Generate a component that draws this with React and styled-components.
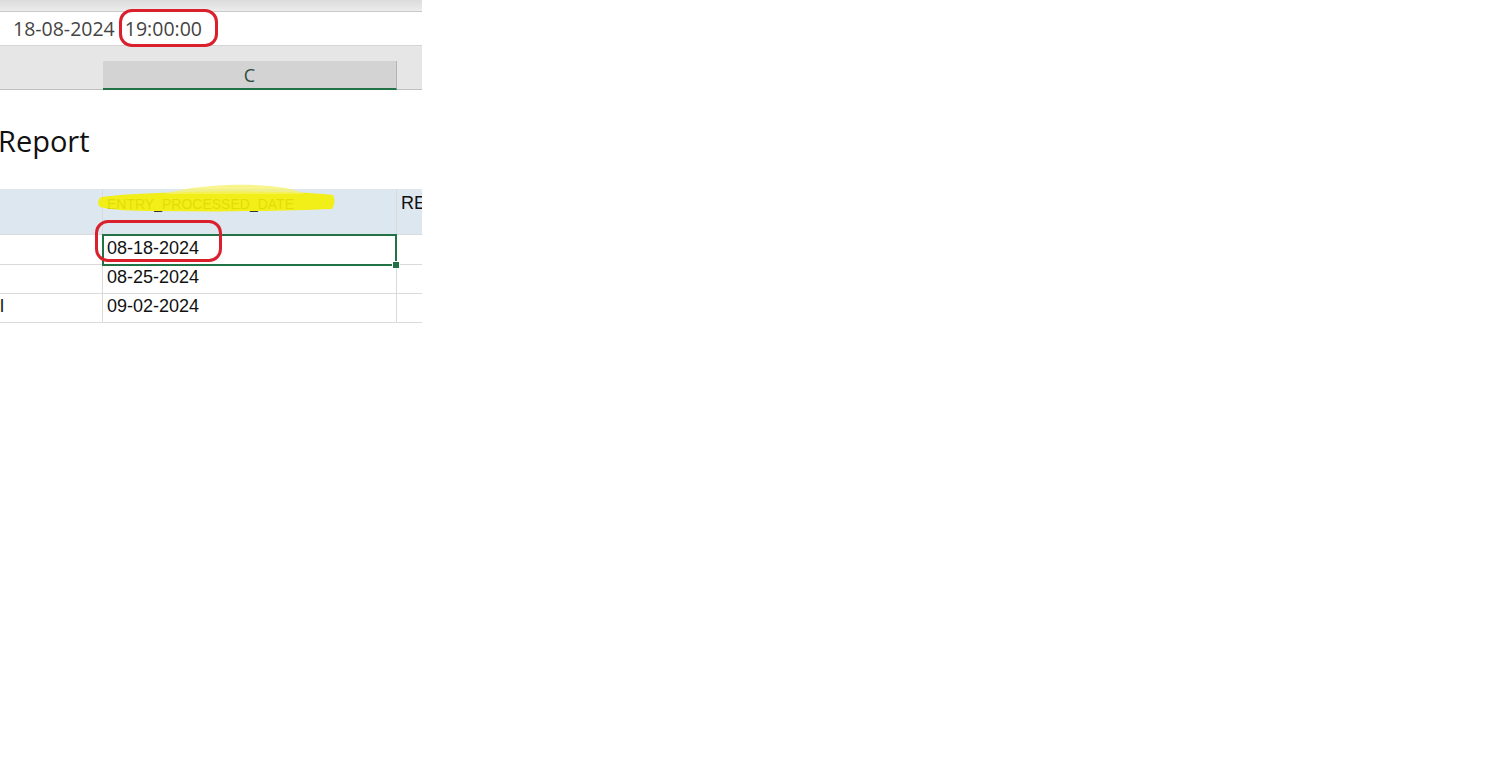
import React from 'react';
import styled, { createGlobalStyle } from 'styled-components';

const GlobalStyle = createGlobalStyle`
	html, body {
		margin: 0;
		padding: 0;
		background: #ffffff;
	}
	body {
		width: 1502px;
		height: 769px;
		overflow: hidden;
	}
`;

//Clipped sheet on the left
const Sheet = styled.div`
	position: relative;
	width: 422px;
	display: flex;
	flex-direction: column;
`;

const TopStrip = styled.div`
	height: 11px;
	background: linear-gradient(#dcdcdc, #ececec);
	border-bottom: 1px solid #c9c9c9;
`;

const FormulaBar = styled.div`
	height: 33px;
	display: flex;
	align-items: center;
	padding-left: 13px;
	background: #ffffff;
	border-bottom: 1px solid #d4d4d4;
	font-family: 'Open Sans', 'Noto Sans', sans-serif;
	font-size: 19.5px;
	word-spacing: 5px;
	color: #444444;
	white-space: nowrap;
`;

const ColumnBar = styled.div`
	height: 43px;
	display: flex;
	align-items: flex-end;
	background: #e6e6e6;
	border-bottom: 1px solid #c0c0c0;
`;

const ColumnHead = styled.div`
	width: ${(p) => p.$w}px;
	height: ${(p) => (p.$active ? 29 : 43)}px;
	display: flex;
	align-items: center;
	justify-content: center;
	box-sizing: border-box;
	background: ${(p) => (p.$active ? '#d3d3d3' : 'transparent')};
	border-bottom: ${(p) => (p.$active ? '2px solid #217346' : 'none')};
	border-right: ${(p) => (p.$active ? '1px solid #b4b4b4' : 'none')};
	font-family: 'Open Sans', 'Noto Sans', sans-serif;
	font-size: 18px;
	color: #2d4d3a;
	margin-bottom: -1px;
`;

const Title = styled.h1`
	margin: 31px 0 0 -2px;
	height: 68px;
	font-family: 'Open Sans', 'Noto Sans', sans-serif;
	font-weight: 400;
	font-size: 29px;
	line-height: 40px;
	color: #111111;
`;

const Grid = styled.div`
	display: grid;
	grid-template-columns: 103px 294px 25px;
	grid-template-rows: 46px 30px 29px 29px;
`;

const Cell = styled.div`
	position: relative;
	box-sizing: border-box;
	background: ${(p) => (p.$head ? '#dde7f0' : '#ffffff')};
	border-right: ${(p) => (p.$last ? 'none' : '1px solid #dadada')};
	border-bottom: 1px solid #dadada;
	padding: ${(p) => (p.$head ? '4px 0 0 4px' : '0 0 3px 4px')};
	padding-left: ${(p) => (p.$flush ? 0 : 4)}px;
	font-family: 'Liberation Sans', Arial, sans-serif;
	font-size: 18px;
	color: #111111;
	white-space: nowrap;
	overflow: ${(p) => (p.$selected ? 'visible' : 'hidden')};
	z-index: ${(p) => (p.$selected ? 1 : 0)};
	display: flex;
	align-items: ${(p) => (p.$head ? 'flex-start' : 'center')};
`;

const HiddenText = styled.span`
	font-size: 14px;
	margin-top: 3px;
	color: #333333;
`;

const Selection = styled.div`
	position: absolute;
	left: -1px;
	top: -1px;
	right: -1px;
	bottom: -2px;
	border: 2px solid #217346;
	pointer-events: none;
	&::after {
		content: '';
		position: absolute;
		right: -5px;
		bottom: -5px;
		width: 6px;
		height: 6px;
		background: #217346;
		border: 1px solid #ffffff;
	}
`;

//Marker annotations drawn over the screenshot
const RedMark = styled.div`
	position: absolute;
	left: ${(p) => p.$x}px;
	top: ${(p) => p.$y}px;
	width: ${(p) => p.$w}px;
	height: ${(p) => p.$h}px;
	box-sizing: border-box;
	border: 3.5px solid #d9202c;
	border-radius: 13px;
	pointer-events: none;
	z-index: 3;
`;

const Scribble = styled.svg`
	position: absolute;
	left: 96px;
	top: 182px;
	pointer-events: none;
	z-index: 2;
`;

const rows = [
	{ a: '', c: '08-18-2024', selected: true },
	{ a: '', c: '08-25-2024' },
	{ a: 'l', c: '09-02-2024' },
];

export default function App() {
	return (
		<>
			<GlobalStyle />
			<Sheet>
				<TopStrip />
				<FormulaBar>18-08-2024 19:00:00</FormulaBar>
				<ColumnBar>
					<ColumnHead $w={103} />
					<ColumnHead $w={294} $active>
						C
					</ColumnHead>
				</ColumnBar>
				<Title>Report</Title>
				<Grid>
					<Cell $head />
					<Cell $head>
						<HiddenText>ENTRY_PROCESSED_DATE</HiddenText>
					</Cell>
					<Cell $head $last>
						RE
					</Cell>
					{rows.map((r) => (
						<React.Fragment key={r.c}>
							<Cell $flush>{r.a}</Cell>
							<Cell $selected={r.selected}>
								{r.c}
								{r.selected && <Selection />}
							</Cell>
							<Cell $last />
						</React.Fragment>
					))}
				</Grid>

				<Scribble width="242" height="32" viewBox="0 0 242 32">
					<path
						d="M5 15 C30 12 60 11 90 10 C120 9 150 9 180 10 C200 10 220 11 237 13 C239 17 239 22 236 27 C210 28 180 29 150 29 C120 30 90 29 60 29 C35 29 15 28 4 25 C1 22 2 18 5 15 Z"
						fill="#f4ee00"
						opacity="0.9"
					/>
					<path
						d="M70 11 C90 6 110 4 130 3 C150 2 170 3 190 6 C200 8 205 10 208 12 L70 12 Z"
						fill="#f6f26a"
						opacity="0.75"
					/>
				</Scribble>
				<RedMark $x={119} $y={9} $w={99} $h={38} />
				<RedMark $x={95} $y={220} $w={127} $h={42} />
			</Sheet>
		</>
	);
}
